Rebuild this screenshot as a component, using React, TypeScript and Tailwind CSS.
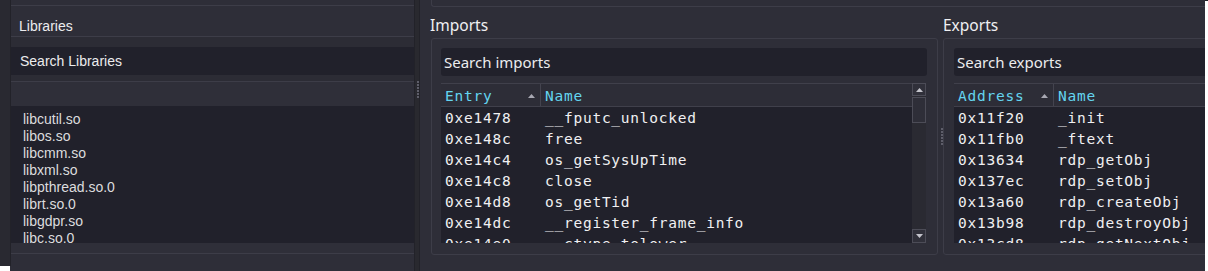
import React from "react";

const imports: [string, string][] = [
  ["0xe1478", "__fputc_unlocked"],
  ["0xe148c", "free"],
  ["0xe14c4", "os_getSysUpTime"],
  ["0xe14c8", "close"],
  ["0xe14d8", "os_getTid"],
  ["0xe14dc", "__register_frame_info"],
  ["0xe14e0", "__ctype_tolower"],
];

const exportsList: [string, string][] = [
  ["0x11f20", "_init"],
  ["0x11fb0", "_ftext"],
  ["0x13634", "rdp_getObj"],
  ["0x137ec", "rdp_setObj"],
  ["0x13a60", "rdp_createObj"],
  ["0x13b98", "rdp_destroyObj"],
  ["0x13cd8", "rdp_getNextObj"],
];

const libs = [
  "libcutil.so",
  "libos.so",
  "libcmm.so",
  "libxml.so",
  "libpthread.so.0",
  "librt.so.0",
  "libgdpr.so",
  "libc.so.0",
];

function Dots() {
  return (
    <div className="flex flex-col gap-[1px]">
      {[0, 1, 2, 3, 4, 5].map((i) => (
        <div key={i} className="w-[2px] h-[2px] bg-[#5e5e6a]" />
      ))}
    </div>
  );
}

function SortArrow() {
  return (
    <svg width="7" height="4" viewBox="0 0 7 4">
      <path d="M0 4 L3.5 0 L7 4Z" fill="#a8a8b2" />
    </svg>
  );
}

function Scrollbar() {
  return (
    <div className="w-[14px] flex flex-col bg-[#2a2a32]">
      <div className="h-[13px] border border-[#4c4c57] bg-[#30303a] flex items-center justify-center">
        <svg width="7" height="4" viewBox="0 0 7 4">
          <path d="M0 4 L3.5 0 L7 4Z" fill="#c4c4cc" />
        </svg>
      </div>
      <div className="h-[26px] mt-[1px] border border-[#4c4c57] bg-[#2e2e38]" />
      <div className="flex-1" />
      <div className="h-[14px] border border-[#4c4c57] bg-[#30303a] flex items-center justify-center">
        <svg width="7" height="4" viewBox="0 0 7 4">
          <path d="M0 0 L3.5 4 L7 0Z" fill="#c4c4cc" />
        </svg>
      </div>
    </div>
  );
}

const mono = "font-['DejaVu_Sans_Mono',monospace] text-[14.5px] tracking-[0.75px]";

function Table({
  first,
  rows,
  scroll,
}: {
  first: string;
  rows: [string, string][];
  scroll?: boolean;
}) {
  return (
    <div className="flex h-[160px]">
      <div className="flex-1 flex flex-col min-w-0">
        <div className={`h-[24px] flex bg-[#2d2d37] border-t border-b border-[#40404b] ${mono} text-[#64d5f0]`}>
          <div className="w-[100px] border-r border-[#44444f] flex items-center justify-between pl-[4px] pr-[5px] pt-[2px] leading-[21px]">
            <span>{first}</span>
            <SortArrow />
          </div>
          <div className="flex-1 flex items-center pl-[4px] pt-[2px] leading-[21px]">Name</div>
        </div>
        <div className={`flex-1 bg-[#21212b] overflow-hidden pt-[1px] ${mono} text-[#f0f0f2]`}>
          {rows.map(([a, n]) => (
            <div key={a} className="flex h-[21px] leading-[21px] whitespace-nowrap">
              <div className="w-[100px] pl-[4px]">{a}</div>
              <div className="pl-[4px]">{n}</div>
            </div>
          ))}
        </div>
      </div>
      {scroll && <Scrollbar />}
    </div>
  );
}

function Search({ text }: { text: string }) {
  return (
    <div className="h-[28px] rounded-[3px] bg-[#21212b] flex items-center pl-[3px] font-['Noto_Sans',sans-serif] text-[15px] text-[#ececee] whitespace-nowrap">
      {text}
    </div>
  );
}

export default function App() {
  return (
    <div className="w-[1208px] h-[271px] bg-white flex overflow-hidden">
      <div className="w-[1205px] h-full flex bg-[#2e2e38]">
        {/* outer left strip */}
        <div className="w-[11px] h-full flex flex-col">
          <div className="flex-1 bg-[#292931] border-r border-[#222229]" />
          <div className="h-[5px] w-[10px] bg-white" />
        </div>

        {/* left panel */}
        <div className="w-[404px] h-full flex flex-col bg-[#2e2e38] border-r border-[#222229] font-['Liberation_Sans',Arial,sans-serif] text-[14px]">
          <div className="h-[6px] border-b border-[#3d3d48] shrink-0" />
          <div className="h-[31px] border-b border-[#3d3d48] pl-[8px] pt-[12px] leading-[17px] text-[#ececee] shrink-0">
            Libraries
          </div>
          <div className="h-[10px] bg-[#2c2c35] shrink-0" />
          <div className="h-[28px] bg-[#21212b] flex items-center pl-[9px] text-[#ececee] shrink-0">
            Search Libraries
          </div>
          <div className="h-[7px] border-b border-[#3d3d48] bg-[#2c2c35] shrink-0" />
          <div className="h-[24px] bg-[#2f2f39] shrink-0" />
          <div className="h-[137px] bg-[#21212b] overflow-hidden pt-[5px] pl-[12px] text-[#dcdcde] leading-[17px] shrink-0">
            {libs.map((l) => (
              <div key={l}>{l}</div>
            ))}
          </div>
          <div className="h-[11px] bg-[#2f2f39] border-b border-[#3d3d48] shrink-0" />
          <div className="flex-1" />
        </div>

        {/* splitter */}
        <div className="w-[5px] h-full bg-[#29292f] border-r border-[#222229] pl-[2px] pt-[81px]">
          <Dots />
        </div>

        {/* right pane */}
        <div className="w-[785px] h-full flex flex-col overflow-hidden">
          <div className="h-[7px] pl-[11px] shrink-0">
            <div className="h-full border-l border-b border-[#3d3d48] rounded-bl-[3px]" />
          </div>
          <div className="flex">
            {/* imports */}
            <div className="w-[518px] flex flex-col">
              <div className="h-[31px] pl-[10px] pt-[8px] leading-[20px] font-['Noto_Sans',sans-serif] text-[15.5px] text-[#f0f0f2]">
                Imports
              </div>
              <div className="ml-[11px] h-[217px] border border-[#3d3d48] rounded-[3px] pt-[9px] pl-[9px] pr-[10px]">
                <Search text="Search imports" />
                <div className="mt-[7px] mr-[1px]">
                  <Table first="Entry" rows={imports} scroll />
                </div>
              </div>
            </div>
            {/* splitter */}
            <div className="w-[5px] pl-[3px] pt-[121px]">
              <Dots />
            </div>
            {/* exports */}
            <div className="w-[262px] flex flex-col overflow-hidden">
              <div className="h-[31px] pt-[8px] leading-[20px] font-['Noto_Sans',sans-serif] text-[15.5px] text-[#f0f0f2]">
                Exports
              </div>
              <div className="w-[320px] h-[217px] border border-[#3d3d48] rounded-[3px] pt-[9px] pl-[10px]">
                <Search text="Search exports" />
                <div className="mt-[7px]">
                  <Table first="Address" rows={exportsList} />
                </div>
              </div>
            </div>
          </div>
        </div>
      </div>
      <div className="w-[3px] h-full border-t border-[#222228]" />
    </div>
  );
}
